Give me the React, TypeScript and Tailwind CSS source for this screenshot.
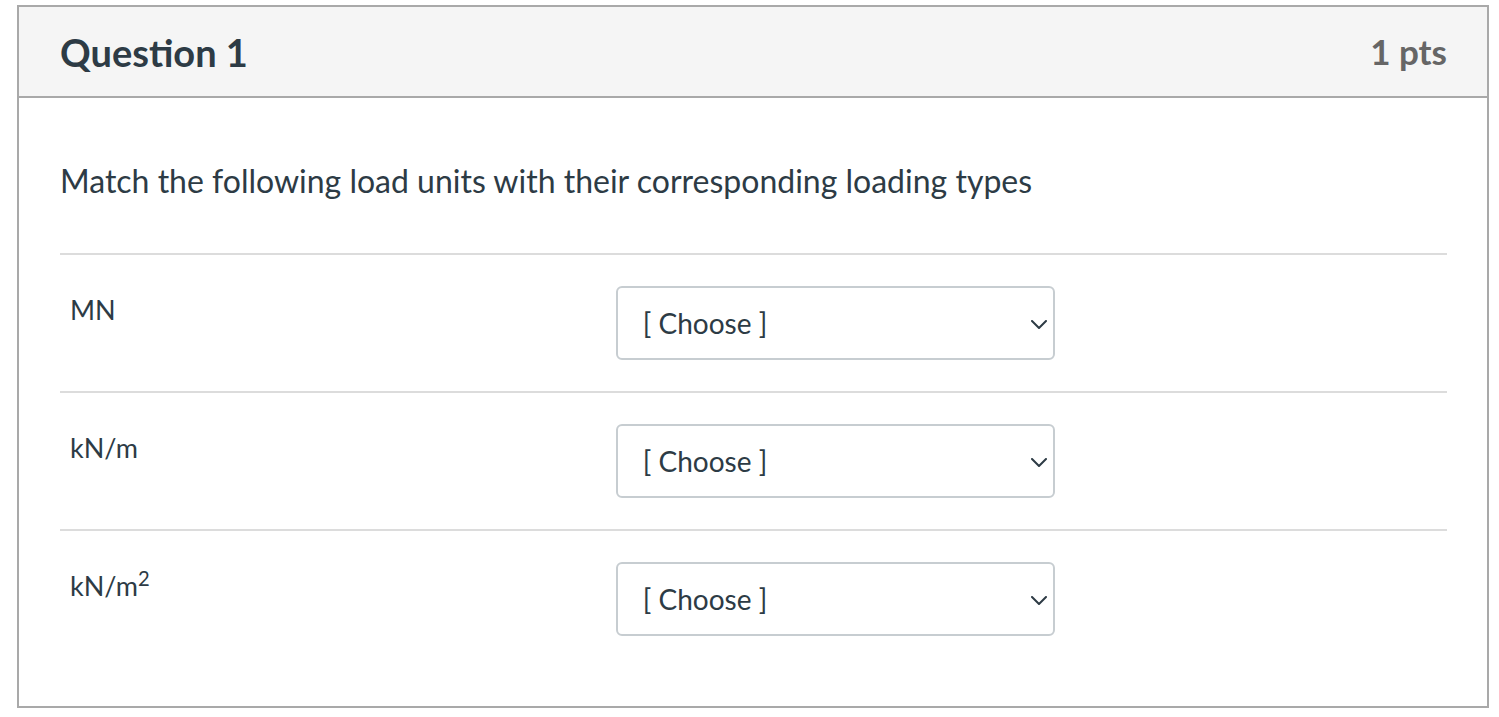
type Row = { label: React.ReactNode }

const rows: Row[] = [
  { label: "MN" },
  { label: "kN/m" },
  {
    label: (
      <>
        kN/m<sup>2</sup>
      </>
    ),
  },
]

function ChooseSelect() {
  return (
    <div className="ml-px flex h-[74px] w-[439px] items-center justify-between rounded-[6px] border-2 border-[#c7cdd1] bg-white pl-[25px] pr-[6px]">
      <span className="text-[28px] leading-none text-[#2d3b45]">[ Choose ]</span>
      <svg width="16" height="9" viewBox="0 0 16 9" fill="none" className="mt-[2px] text-[#2d3b45]">
        <polyline points="1,1 8,8 15,1" stroke="currentColor" strokeWidth="2" strokeLinecap="round" strokeLinejoin="round" />
      </svg>
    </div>
  )
}

export default function App() {
  return (
    <div className="min-h-[717px] bg-white pt-[5px] pl-[17px] font-['Lato',sans-serif] text-[#2d3b45]">
      <div className="w-[1472px] border-2 border-[#a9a9a9] bg-white">
        {/* Header */}
        <div className="flex h-[91px] items-center justify-between border-b-2 border-[#a9a9a9] bg-[#f5f5f5] pl-[41px] pr-[40px]">
          <h2 className="text-[38px] font-bold leading-none">Question 1</h2>
          <span className="text-[35px] font-bold leading-none text-[#666666]">1 pts</span>
        </div>

        {/* Body */}
        <div className="pl-[41px] pr-[40px] pt-[59px] pb-[39px]">
          <p className="text-[32px] leading-[48px]">
            Match the following load units with their corresponding loading types
          </p>

          <div className="mt-[48px]">
            {rows.map((row, i) => (
              <div key={i} className="flex border-t-2 border-[#dcdcdc] py-[31px]">
                <div className="w-[40%] pl-[10px] pt-[4px] text-[27px] leading-[40px]">
                  {row.label}
                </div>
                <ChooseSelect />
              </div>
            ))}
          </div>
        </div>
      </div>
    </div>
  )
}
